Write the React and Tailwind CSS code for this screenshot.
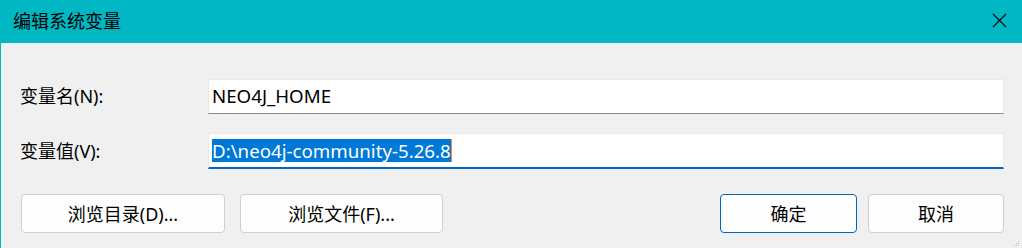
import React from 'react'

const font = { fontFamily: '"Noto Sans", "Noto Sans CJK SC", sans-serif' }

function Field({ label, children }) {
  return (
    <div className="flex items-center">
      <div className="w-[188px] shrink-0 text-[18px] text-black">{label}</div>
      {children}
    </div>
  )
}

function Button({ children, primary, className }) {
  return (
    <button
      className={
        'h-[39px] rounded-[4px] bg-[#fdfdfd] text-[18px] text-black leading-none ' +
        (primary ? 'border border-[#0067c0] ' : 'border border-[#d0d0d0] ') +
        className
      }
    >
      {children}
    </button>
  )
}

export default function App() {
  return (
    <div className="w-[1022px] h-[248px] bg-[#f0f0f0] overflow-hidden" style={font}>
      <div className="h-[43px] bg-[#00b7c3] flex items-center justify-between pl-[13px] pr-[15px]">
        <span className="text-[18px] text-black">编辑系统变量</span>
        <svg width="15" height="15" viewBox="0 0 15 15" className="mt-[-2px]">
          <path d="M1 1 L14 14 M14 1 L1 14" stroke="#111" strokeWidth="1.3" />
        </svg>
      </div>
      <div className="relative h-[205px] border-l border-[#00b7c3] pl-[19px] pr-[18px]">
        <div className="pt-[36px] flex flex-col gap-[19px]">
          <Field label="变量名(N):">
            <div className="flex-1 h-[35px] bg-white border border-[#e8e8e8] border-b-[#868686] flex items-center pl-[3px] text-[18.7px] text-black">
              NEO4J_HOME
            </div>
          </Field>
          <Field label="变量值(V):">
            <div className="flex-1 h-[36px] bg-white border border-[#e8e8e8] border-b-2 border-b-[#0067c0] flex items-center pl-[3px] text-[18.7px]">
              <span className="bg-[#0078d7] text-white leading-[23px]">D:\neo4j-community-5.26.8</span>
              <span className="w-px h-[23px] bg-[#ff8728]"></span>
            </div>
          </Field>
        </div>
        <div className="mt-[25px] flex items-center">
          <Button className="w-[204px] ml-px">浏览目录(D)...</Button>
          <Button className="w-[203px] ml-[15px]">浏览文件(F)...</Button>
          <Button primary className="w-[137px] ml-auto">确定</Button>
          <Button className="w-[136px] ml-[11px]">取消</Button>
        </div>
        <svg width="6" height="6" viewBox="0 0 6 6" className="absolute right-[2px] bottom-[1px]">
          <rect x="4" y="0" width="1" height="1" fill="#bbb" />
          <rect x="2" y="2" width="1" height="1" fill="#bbb" />
          <rect x="4" y="2" width="1" height="1" fill="#bbb" />
          <rect x="0" y="4" width="1" height="1" fill="#bbb" />
          <rect x="2" y="4" width="1" height="1" fill="#bbb" />
          <rect x="4" y="4" width="1" height="1" fill="#bbb" />
        </svg>
      </div>
    </div>
  )
}
